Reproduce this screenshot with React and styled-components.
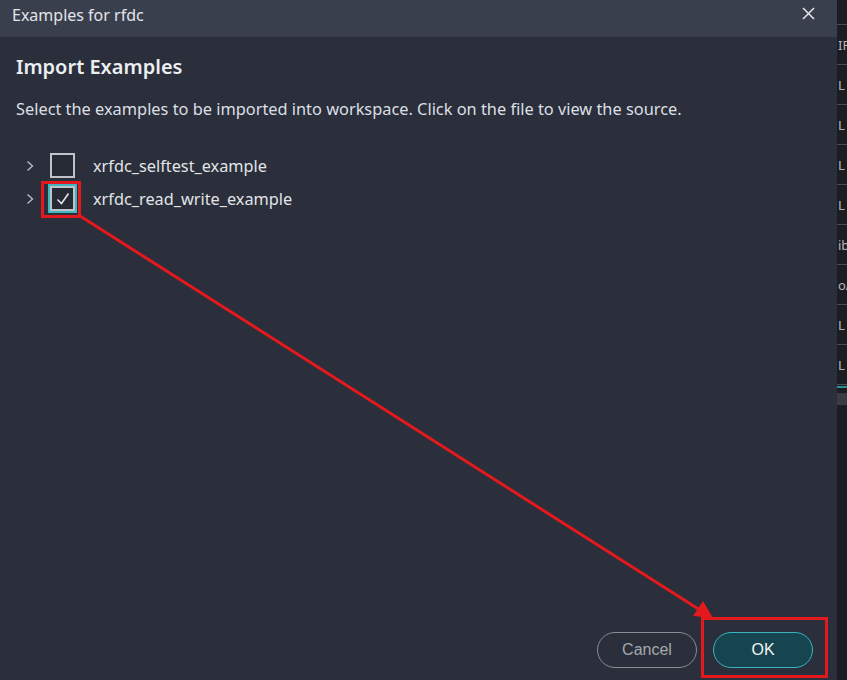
import React from "react";
import styled, { createGlobalStyle } from "styled-components";

const Global = createGlobalStyle`
  html, body { margin: 0; padding: 0; background: #1b1c21; }
  body { font-family: "Noto Sans", "Open Sans", sans-serif; }
`;

const examples = [
  { name: "xrfdc_selftest_example", checked: false },
  { name: "xrfdc_read_write_example", checked: true },
];

const stripRows = ["IP", "L", "L", "L", "L", "ib", "o/", "L", "L"];

const Chevron = () => (
  <svg width="10" height="14" viewBox="0 0 10 14">
    <path d="M2.5 2.5 L7.5 7 L2.5 11.5" fill="none" stroke="#b9bcc3" strokeWidth="1.4" />
  </svg>
);

const Tick = () => (
  <svg width="18" height="18" viewBox="0 0 18 18">
    <path d="M3.5 9.5 L7.5 13.5 L14.5 3.5" fill="none" stroke="#e8eaee" strokeWidth="1.5" />
  </svg>
);

const App = () => (
  <Page>
    <Global />
    <Dialog>
      <Header>
        <HeaderTitle>Examples for rfdc</HeaderTitle>
        <Close>
          <svg width="13" height="13" viewBox="0 0 13 13">
            <path d="M1 1 L12 12 M12 1 L1 12" stroke="#e4e6ea" strokeWidth="1.5" />
          </svg>
        </Close>
      </Header>
      <Body>
        <Title>Import Examples</Title>
        <Description>
          Select the examples to be imported into workspace. Click on the file to view the source.
        </Description>
        <Tree>
          {examples.map((ex) => (
            <Row key={ex.name}>
              <Chevron />
              <Box checked={ex.checked}>{ex.checked && <Tick />}</Box>
              <Label>{ex.name}</Label>
            </Row>
          ))}
        </Tree>
        <Footer>
          <Button>Cancel</Button>
          <Button primary>OK</Button>
        </Footer>
      </Body>
    </Dialog>
    <Strip>
      <StripTop />
      {stripRows.map((t, i) => (
        <StripRow key={i}>{t}</StripRow>
      ))}
      <StripAccent />
      <StripGrey />
    </Strip>
    <Annotation width="847" height="680" viewBox="0 0 847 680">
      <rect x="42.5" y="182.5" width="37" height="34" fill="none" stroke="#e3191d" strokeWidth="3" />
      <rect x="702.5" y="618.5" width="124" height="58" fill="none" stroke="#e3191d" strokeWidth="3" />
      <line x1="80" y1="216" x2="700" y2="610" stroke="#e3191d" strokeWidth="3" />
      <polygon points="713,618 693,616 703,601" fill="#e3191d" />
    </Annotation>
  </Page>
);

const Page = styled.div`
  position: relative;
  display: flex;
  width: 847px;
  height: 680px;
  overflow: hidden;
`;

const Dialog = styled.div`
  width: 837px;
  flex-shrink: 0;
  display: flex;
  flex-direction: column;
  background: #2a2f3b;
`;

const Header = styled.div`
  height: 37px;
  background: #3a3f4e;
  display: flex;
  align-items: center;
  justify-content: space-between;
  padding: 0 22px 0 12px;
`;

const HeaderTitle = styled.div`
  color: #e3e5e9;
  font-size: 16px;
  line-height: 22px;
  margin-top: -7px;
`;

const Close = styled.div`
  display: flex;
  margin-top: -10px;
`;

const Body = styled.div`
  flex: 1;
  display: flex;
  flex-direction: column;
  padding: 16px 24px 12px 16px;
`;

const Title = styled.div`
  color: #eceef1;
  font-size: 20px;
  font-weight: 600;
  line-height: 28px;
`;

const Description = styled.div`
  color: #dcdfe4;
  font-size: 16.35px;
  line-height: 22px;
  margin-top: 17px;
`;

const Tree = styled.div`
  margin-top: 33px;
  display: flex;
  flex-direction: column;
  gap: 8px;
`;

const Row = styled.div`
  display: flex;
  align-items: center;
  height: 25px;
  padding-left: 9px;
`;

const Box = styled.div`
  box-sizing: border-box;
  width: 25px;
  height: 25px;
  margin-left: 15px;
  border: 2px solid #bfc2c8;
  background: #252a35;
  display: flex;
  align-items: center;
  justify-content: center;
  box-shadow: ${(p) => (p.checked ? "0 0 0 2px #3fb7c1" : "none")};
`;

const Label = styled.div`
  color: #e2e4e8;
  font-size: 16.3px;
  margin-left: 18px;
`;

const Footer = styled.div`
  margin-top: auto;
  display: flex;
  justify-content: flex-end;
  gap: 16px;
`;

const Button = styled.div`
  box-sizing: border-box;
  width: 100px;
  height: 36px;
  border-radius: 18px;
  display: flex;
  align-items: center;
  justify-content: center;
  font-family: "Liberation Sans", Arial, sans-serif;
  font-size: 16px;
  border: 1.5px solid ${(p) => (p.primary ? "#3ab3bc" : "#8a8d94")};
  background: ${(p) => (p.primary ? "#17454f" : "transparent")};
  color: ${(p) => (p.primary ? "#f2f4f6" : "#a6a9ae")};
`;

const Strip = styled.div`
  flex: 1;
  min-width: 0;
  background: #1c1d22;
  display: flex;
  flex-direction: column;
  overflow: hidden;
`;

const StripTop = styled.div`
  height: 24px;
  border-bottom: 1px solid #4a4d55;
  flex-shrink: 0;
`;

const StripRow = styled.div`
  box-sizing: border-box;
  height: 40px;
  flex-shrink: 0;
  border-bottom: 1px solid #4a4d55;
  color: #b5b7bc;
  font-size: 13px;
  line-height: 16px;
  padding: 12px 0 0 1px;
  white-space: nowrap;
  overflow: hidden;
`;

const StripAccent = styled.div`
  height: 2px;
  background: #2f8f95;
  margin-top: 1px;
  flex-shrink: 0;
`;

const StripGrey = styled.div`
  height: 12px;
  background: #3a3c43;
  margin-top: 5px;
  flex-shrink: 0;
`;

const Annotation = styled.svg`
  position: absolute;
  left: 0;
  top: 0;
  pointer-events: none;
`;

export default App;
